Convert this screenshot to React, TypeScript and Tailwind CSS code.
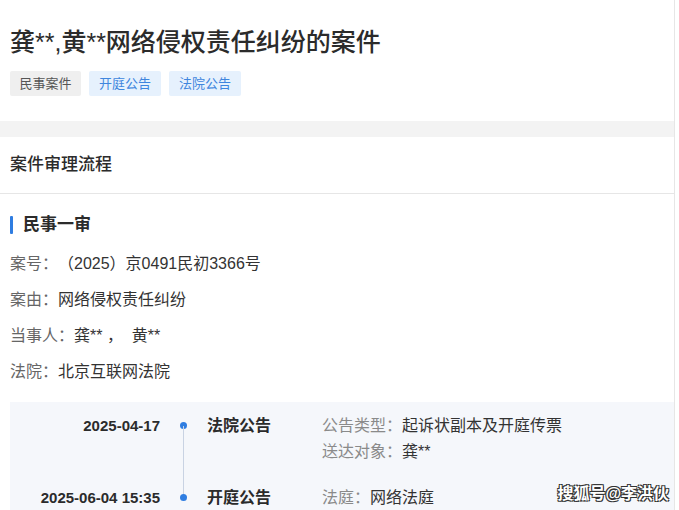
const font = { fontFamily: '"Liberation Sans", "Noto Sans CJK SC", sans-serif' };

const infoRows = [
  { label: "案号：", value: "（2025）京0491民初3366号" },
  { label: "案由：", value: "网络侵权责任纠纷" },
  { label: "当事人：", value: "龚** ，  黄**" },
  { label: "法院：", value: "北京互联网法院" },
];

const events = [
  {
    date: "2025-04-17",
    title: "法院公告",
    lines: [
      { label: "公告类型：", value: "起诉状副本及开庭传票" },
      { label: "送达对象：", value: "龚**" },
    ],
  },
  {
    date: "2025-06-04 15:35",
    title: "开庭公告",
    lines: [{ label: "法庭：", value: "网络法庭" }],
  },
];

export default function App() {
  return (
    <div
      className="relative h-[510px] w-[679px] overflow-hidden bg-white text-[#333]"
      style={font}
    >
      <div className="h-full w-[675px] border-r border-[#e6e6e6]">
        <header className="h-[121px] px-[10px] pt-[25px]">
          <h1 className="text-[25px] font-medium leading-[34px] text-[#2b2b2b]">
            龚**,黄**网络侵权责任纠纷的案件
          </h1>
          <div className="mt-[12px] flex gap-2">
            <span className="flex h-[25px] w-[71px] items-center justify-center rounded-[2px] bg-[#efefef] text-[13px] text-[#555]">
              民事案件
            </span>
            <span className="flex h-[25px] w-[72px] items-center justify-center rounded-[2px] bg-[#e6f1fd] text-[13px] text-[#3f86de]">
              开庭公告
            </span>
            <span className="flex h-[25px] w-[72px] items-center justify-center rounded-[2px] bg-[#e6f1fd] text-[13px] text-[#3f86de]">
              法院公告
            </span>
          </div>
        </header>

        <div className="h-[16px] bg-[#f3f3f3]" />

        <section>
          <h2 className="flex h-[56px] items-center px-[10px] text-[17px] font-medium text-[#2b2b2b]">
            案件审理流程
          </h2>
          <div className="h-px bg-[#e6e6e6]" />

          <div className="mt-[20px] flex items-center gap-[10px] px-[10px]">
            <span className="h-[18px] w-[3px] rounded-[1px] bg-[#2f7de1]" />
            <span className="text-[17px] font-bold leading-[22px] text-[#2b2b2b]">民事一审</span>
          </div>

          <div className="mt-[16px] flex flex-col gap-[13px] px-[10px]">
            {infoRows.map((r) => (
              <div key={r.label} className="flex h-[23px] items-center text-[16px]">
                <span className="text-[#666]">{r.label}</span>
                <span className="whitespace-pre text-[#333]">{r.value}</span>
              </div>
            ))}
          </div>

          <div className="ml-[10px] mt-[19px] h-[200px] bg-[#f5f7fb] pt-[13px]">
            {events.map((e, i) => (
              <div key={e.date} className="flex h-[72px]">
                <div className="w-[150px] pt-[1px] text-right text-[15px] font-bold leading-[20px] text-[#2b2b2b]">
                  {e.date}
                </div>
                <div className="relative flex w-[47px] justify-center">
                  <span className="mt-[7px] h-[7px] w-[7px] rounded-full bg-[#2f7de1]" />
                  {i < events.length - 1 && (
                    <span className="absolute left-[23px] top-[11px] h-[72px] w-px bg-[#c9d3e3]" />
                  )}
                </div>
                <div className="w-[115px] text-[16px] font-bold leading-[22px] text-[#2b2b2b]">
                  {e.title}
                </div>
                <div className="flex flex-col gap-[4px]">
                  {e.lines.map((l) => (
                    <div key={l.label} className="text-[16px] leading-[22px]">
                      <span className="text-[#8a8a8a]">{l.label}</span>
                      <span className="text-[#333]">{l.value}</span>
                    </div>
                  ))}
                </div>
              </div>
            ))}
          </div>
        </section>
      </div>

      <div
        className="absolute right-[10px] top-[482px] text-[16px] font-bold text-white"
        style={{
          textShadow:
            "1px 1px 0 #333, -1px -1px 0 #333, 1px -1px 0 #333, -1px 1px 0 #333",
        }}
      >
        搜狐号@李洪伙
      </div>
    </div>
  );
}
